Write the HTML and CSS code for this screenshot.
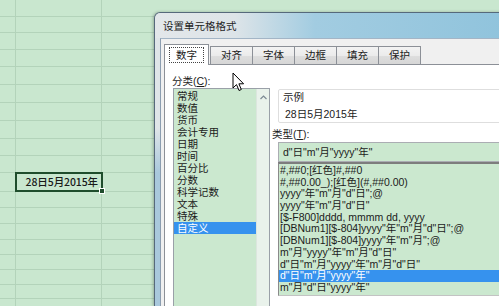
FILE: index.html
```html
<!DOCTYPE html>
<html lang="zh-CN">
<head>
<meta charset="UTF-8">
<title>设置单元格格式</title>
<link rel="stylesheet" href="styles.css">
</head>
<body>
<div class="sheet">
    <div class="row h17"></div>
    <div class="row h16"></div>
    <div class="row h17"></div>
    <div class="row h17"></div>
    <div class="row h18"></div>
    <div class="row h18"></div>
    <div class="row h18"></div>
    <div class="row h18"></div>
    <div class="row h17"></div>
    <div class="row h17"></div>
    <div class="row h19">
        <div class="cell">28日5月2015年<span class="handle"></span></div>
    </div>
    <div class="row h16"></div>
    <div class="row h16"></div>
    <div class="row h16"></div>
    <div class="row h15"></div>
    <div class="row h15"></div>
    <div class="row h15"></div>
    <div class="row h14"></div>
</div>

<div class="dialog">
    <div class="titlebar">设置单元格格式</div>
    <div class="dlg-body">
        <div class="tabs">
            <div class="tab active"><span>数字</span></div>
            <div class="tab"><span>对齐</span></div>
            <div class="tab"><span>字体</span></div>
            <div class="tab"><span>边框</span></div>
            <div class="tab"><span>填充</span></div>
            <div class="tab"><span>保护</span></div>
        </div>
        <div class="panel">
            <div class="col-left">
                <div class="label">分类(<u>C</u>):</div>
                <div class="catlist">
                    <ul class="items">
                        <li>常规</li>
                        <li>数值</li>
                        <li>货币</li>
                        <li>会计专用</li>
                        <li>日期</li>
                        <li>时间</li>
                        <li>百分比</li>
                        <li>分数</li>
                        <li>科学记数</li>
                        <li>文本</li>
                        <li>特殊</li>
                        <li class="sel">自定义</li>
                    </ul>
                    <div class="vscroll">
                        <svg width="7" height="5" viewBox="0 0 7 5"><path d="M0.5 4 L3.5 1 L6.5 4" fill="none" stroke="#7d8a94" stroke-width="1.2"/></svg>
                    </div>
                </div>
            </div>
            <div class="col-right">
                <div class="sample">
                    <div class="legend">示例</div>
                    <div class="sample-text">28日5月2015年</div>
                </div>
                <div class="label">类型(<u>T</u>):</div>
                <div class="type-input">d"日"m"月"yyyy"年"</div>
                <ul class="typelist">
                    <li>#,##0;[红色]#,##0</li>
                    <li>#,##0.00_);[红色](#,##0.00)</li>
                    <li>yyyy"年"m"月"d"日";@</li>
                    <li>yyyy"年"m"月"d"日"</li>
                    <li>[$-F800]dddd, mmmm dd, yyyy</li>
                    <li>[DBNum1][$-804]yyyy"年"m"月"d"日";@</li>
                    <li>[DBNum1][$-804]yyyy"年"m"月";@</li>
                    <li>m"月"yyyy"年"m"月"d"日"</li>
                    <li>d"日"m"月"yyyy"年"m"月"d"日"</li>
                    <li class="sel">d"日"m"月"yyyy"年"</li>
                    <li>m"月"d"日"yyyy"年"</li>
                </ul>
            </div>
        </div>
    </div>
</div>

<svg class="cursor" width="13" height="20" viewBox="0 0 13 20">
    <path d="M1 1 L1 16 L4.5 12.6 L7 18.5 L9.3 17.5 L6.9 11.8 L11.6 11.8 Z" fill="#fff" stroke="#000" stroke-width="1" stroke-linejoin="round"/>
</svg>
</body>
</html>
```

FILE: styles.css
```css
:root {
    --sheet: #c9e7cf;
    --grid: #b3d3ba;
    --list: #cbe8cf;
    --select: #3692ee;
    --tab-border: #8c9097;
}

html, body {
    overflow: hidden;
}

body {
    margin: 0;
    width: 499px;
    height: 306px;
    position: relative;
    background: var(--sheet);
    font-family: "Liberation Sans", "Noto Sans CJK SC", sans-serif;
    font-size: 10.5px;
    color: #1b1b1b;
}

/* spreadsheet behind the dialog */
.sheet {
    display: flex;
    flex-direction: column;
    height: 306px;
    overflow: hidden;
    background-image:
        linear-gradient(90deg, transparent 15px, var(--grid) 15px, var(--grid) 16px, transparent 16px),
        linear-gradient(90deg, transparent 101px, var(--grid) 101px, var(--grid) 102px, transparent 102px);
}

.row {
    box-sizing: border-box;
    flex: none;
    border-bottom: 1px solid var(--grid);
}

.h14 { height: 14px; }
.h15 { height: 15px; }
.h16 { height: 16px; }
.h17 { height: 17px; }
.h18 { height: 18px; }
.h19 { height: 19px; }

.cell {
    position: relative;
    box-sizing: border-box;
    width: 88px;
    height: 20px;
    margin: -1px 0 0 15px;
    border: 2px solid #1f4d2c;
    padding-right: 3px;
    text-align: right;
    line-height: 16px;
    font-family: "Noto Sans CJK SC", sans-serif;
    font-size: 10.5px;
    font-weight: 500;
    letter-spacing: -0.1px;
    color: #1a1a1a;
}

.handle {
    position: absolute;
    right: -4px;
    bottom: -4px;
    width: 4px;
    height: 4px;
    background: #1f4d2c;
    border: 1px solid #fff;
}

/* dialog window */
.dialog {
    position: absolute;
    left: 154px;
    top: 12px;
    width: 360px;
    height: 293px;
    overflow: hidden;
    border: 1px solid #56697b;
    border-bottom: none;
    border-radius: 6px 6px 0 0;
    background: linear-gradient(180deg, #dfe5e8 0, #dfe5e8 115px, #a9c8dc 160px, #a9c8dc 100%);
    box-shadow: -1px 0 3px rgba(0, 0, 0, 0.25);
}

.titlebar {
    height: 25px;
    padding-left: 8px;
    line-height: 27px;
    font-size: 10.5px;
    color: #1e1e1e;
    border-radius: 6px 6px 0 0;
    background: linear-gradient(90deg, #e3e7ea 0, #dde4e8 80px, #a2cce1 160px, #8fc3dc 100%);
}

.dlg-body {
    box-sizing: border-box;
    height: 268px;
    margin-left: 5px;
    padding-top: 7px;
    background: #f0f0f0;
    border-left: 1px solid #8b9db0;
    border-top: 1px solid #a3b5c6;
}

.tabs {
    display: flex;
    align-items: flex-end;
    height: 18px;
    padding-left: 5px;
}

.tab {
    box-sizing: border-box;
    width: 43px;
    height: 18px;
    margin-right: -1px;
    border: 1px solid var(--tab-border);
    border-bottom: none;
    background: linear-gradient(180deg, #f3f3f3 0, #ebebeb 50%, #dedede 51%, #d6d6d6 100%);
    text-align: center;
    line-height: 17px;
}

.tab.active {
    position: relative;
    z-index: 1;
    width: 45px;
    height: 21px;
    margin: 0 1px -1px -2px;
    padding-top: 2px;
    background: #fff;
}

.tab.active span {
    display: inline-block;
    padding: 0 6px;
    line-height: 14px;
    outline: 1px dotted #444;
}

.panel {
    display: flex;
    box-sizing: border-box;
    height: 243px;
    margin-left: 3px;
    background: #fff;
    border: 1px solid var(--tab-border);
    border-right: none;
    border-bottom: none;
}

.label {
    height: 14px;
    line-height: 14px;
}

.label u {
    text-decoration: underline;
}

.col-left {
    width: 104px;
    padding: 9px 0 0 7px;
    box-sizing: border-box;
}

.catlist {
    display: flex;
    box-sizing: border-box;
    width: 97px;
    height: 220px;
    margin-left: 1px;
    border: 1px solid #9aa0a8;
    background: var(--list);
}

.items {
    flex: 1;
    margin: 0;
    padding: 1px 0 0;
    list-style: none;
}

.items li {
    height: 12px;
    padding-left: 3px;
    line-height: 12px;
}

.items li.sel,
.typelist li.sel {
    background: var(--select);
    color: #fff;
}

.vscroll {
    width: 12px;
    display: flex;
    justify-content: center;
    padding-top: 6px;
    background: #e9f2eb;
    border-left: 1px solid #dce6de;
}

.col-right {
    flex: 1;
    margin-left: 3px;
    padding-top: 24px;
}

.sample {
    box-sizing: border-box;
    height: 34px;
    margin-left: 6px;
    padding: 1px 0 0 4px;
    border: 1px solid #dedede;
    border-radius: 2px;
}

.legend {
    line-height: 13px;
}

.sample-text {
    padding: 3px 0 0 2px;
    line-height: 14px;
}

.col-right .label {
    margin-top: 4px;
}

.type-input {
    box-sizing: border-box;
    height: 20px;
    margin: 1px 0 0 6px;
    padding-left: 4px;
    line-height: 18px;
    background: var(--list);
    border: 1px solid #abadb3;
}

.typelist {
    box-sizing: border-box;
    height: 134px;
    margin: 0 0 0 6px;
    padding: 1px 0 0;
    list-style: none;
    background: var(--list);
    border-top: 2px solid #7d7d7d;
    border-left: 1px solid #8a8a8a;
    border-bottom: 1px solid #c3c3c3;
}

.typelist li {
    height: 11.7px;
    padding-left: 1px;
    line-height: 11.7px;
    white-space: nowrap;
}

.cursor {
    position: absolute;
    left: 232px;
    top: 72px;
}
```
